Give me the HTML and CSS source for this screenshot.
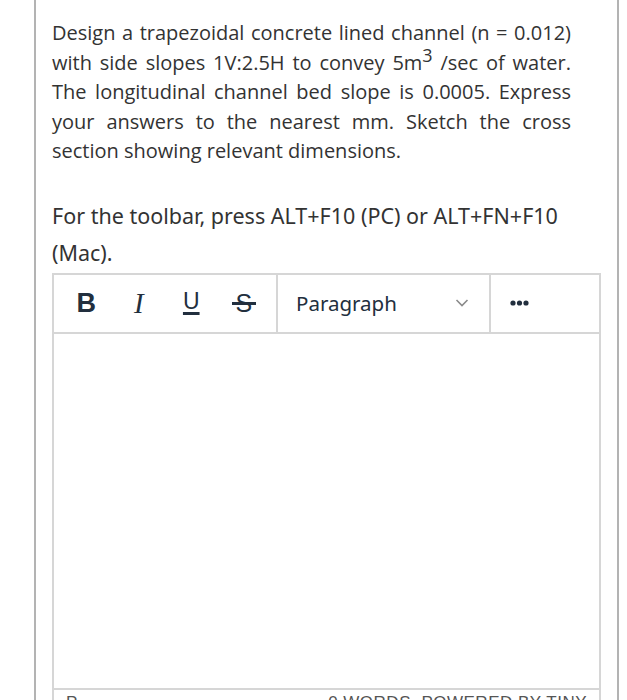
FILE: index.html
```html
<!DOCTYPE html>
<html>
<head>
<meta charset="utf-8">
<link rel="stylesheet" href="styles.css">
</head>
<body>
<div class="card">
  <p class="question">Design a trapezoidal concrete lined channel (n = 0.012) with side slopes 1V:2.5H to convey 5m<sup>3</sup> /sec of water. The longitudinal channel bed slope is 0.0005. Express your answers to the nearest mm. Sketch the cross section showing relevant dimensions.</p>
  <p class="hint">For the toolbar, press ALT+F10 (PC) or ALT+FN+F10 (Mac).</p>
  <div class="editor">
    <div class="toolbar">
      <div class="group fmt">
        <span class="btn"><span class="b">B</span></span>
        <span class="btn"><span class="i">I</span></span>
        <span class="btn"><span class="u">U</span></span>
        <span class="btn"><span class="s">S</span></span>
      </div>
      <div class="group blocks">
        <span class="label">Paragraph</span>
        <svg class="chev" width="14" height="10" viewBox="0 0 14 10"><path d="M1.5 2 L7 7.5 L12.5 2" fill="none" stroke="#8a8a8a" stroke-width="1.6"/></svg>
      </div>
      <div class="group more">
        <svg width="19" height="6" viewBox="0 0 19 6"><circle cx="3" cy="3" r="2.6" fill="#222f3e"/><circle cx="9.5" cy="3" r="2.6" fill="#222f3e"/><circle cx="16" cy="3" r="2.6" fill="#222f3e"/></svg>
      </div>
    </div>
    <div class="area"></div>
    <div class="status">
      <span class="path">P</span>
      <span class="count">0 WORDS&nbsp;&nbsp;POWERED BY TINY</span>
    </div>
  </div>
</div>
</body>
</html>
```
FILE: styles.css
```css
html, body {
  margin: 0;
  padding: 0;
  background: #fff;
  height: 700px;
  overflow: hidden;
}
.card {
  margin-left: 34px;
  width: 549px;
  padding: 18px 16px 0 16px;
  border-left: 2px solid #b3b3b3;
  border-right: 2px solid #b3b3b3;
  min-height: 800px;
}
.question {
  margin: 0;
  width: 519px;
  font-family: "Open Sans", sans-serif;
  font-size: 20px;
  line-height: 29.5px;
  color: #333;
  text-align: justify;
}
.question sup {
  font-size: 0.9em;
  line-height: 0;
  vertical-align: 0.45em;
}
.hint {
  margin: 31px 0 0 0;
  width: 519px;
  font-family: "Noto Sans", sans-serif;
  font-size: 21.5px;
  line-height: 37px;
  color: #333;
}
.editor {
  margin-top: 2px;
  border: 2px solid #d6d6d6;
  border-bottom: none;
}
.toolbar {
  display: flex;
  height: 57px;
  border-bottom: 2px solid #d6d6d6;
}
.group {
  display: flex;
  align-items: center;
  box-sizing: border-box;
}
.fmt {
  width: 224px;
  border-right: 2px solid #d6d6d6;
  padding-left: 6px;
}
.btn {
  display: flex;
  justify-content: center;
  align-items: center;
  width: 52.5px;
  height: 30px;
  color: #222f3e;
}
.b {
  font-family: "Liberation Sans", sans-serif;
  font-weight: bold;
  font-size: 27px;
}
.i {
  font-family: "Liberation Serif", serif;
  font-style: italic;
  font-size: 29px;
}
.u {
  font-family: "Liberation Sans", sans-serif;
  font-size: 23px;
  text-decoration: underline;
  text-decoration-thickness: 2.5px;
  text-underline-offset: 3px;
  position: relative;
  top: -2px;
}
.s {
  font-family: "Liberation Sans", sans-serif;
  font-size: 25px;
  position: relative;
}
.s::after {
  content: "";
  position: absolute;
  left: -3px;
  right: -4px;
  top: 50%;
  height: 2.5px;
  margin-top: -1px;
  background: #222f3e;
}
.blocks {
  width: 213px;
  padding-left: 18px;
  padding-right: 20px;
  justify-content: space-between;
  border-right: 2px solid #d6d6d6;
}
.label {
  font-family: "Noto Sans", sans-serif;
  font-size: 20.5px;
  color: #222f3e;
}
.more {
  padding-left: 19px;
}
.area {
  height: 354px;
  border-bottom: 2px solid #d6d6d6;
}
.status {
  display: flex;
  justify-content: space-between;
  padding: 3px 12px 0 12px;
  font-family: "Liberation Sans", sans-serif;
  font-size: 17px;
  color: #555;
}
.count {
  letter-spacing: 0.5px;
}
```
